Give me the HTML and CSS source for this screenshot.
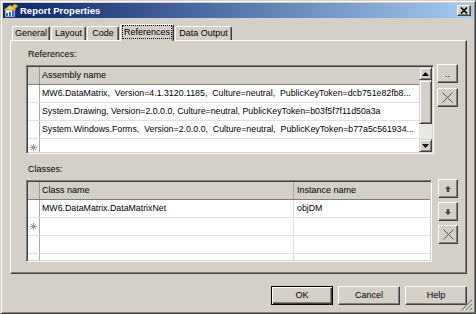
FILE: index.html
```html
<!DOCTYPE html>
<html>
<head>
<meta charset="utf-8">
<link rel="stylesheet" href="styles.css">
</head>
<body>
<div class="window">
  <div class="titlebar">
    <svg class="appicon" viewBox="0 0 16 15" width="16" height="15">
      <rect x="2" y="6" width="10" height="8" fill="#ffffff" stroke="#2a4c9a" stroke-width="1"/>
      <rect x="3" y="10" width="2" height="3" fill="#3a6ad0"/>
      <rect x="6" y="9" width="2" height="4" fill="#3a6ad0"/>
      <rect x="9" y="8" width="2" height="5" fill="#3a6ad0"/>
      <polygon points="6,5 12,1 15,3 10,8" fill="#e8b840" stroke="#a07020" stroke-width="0.6"/>
      <polygon points="1,7 7,2 13,7" fill="#f0d070" stroke="#a07020" stroke-width="0.6"/>
    </svg>
    <span class="title">Report Properties</span>
    <span class="close">
      <svg viewBox="0 0 8 7" width="8" height="7"><path d="M1 0.5 L7 6.5 M7 0.5 L1 6.5" stroke="#000" stroke-width="1.6"/></svg>
    </span>
  </div>
  <div class="content">
    <div class="tabs">
      <div class="tab t-general">General</div>
      <div class="tab t-layout">Layout</div>
      <div class="tab t-code">Code</div>
      <div class="tab t-refs sel"><span class="focus">References</span></div>
      <div class="tab t-data">Data Output</div>
    </div>
    <div class="panel">
      <div class="label lbl-refs">References:</div>
      <div class="row">
        <div class="grid grid-refs">
          <div class="gmain">
            <div class="gr head"><div class="rh"></div><div class="c">Assembly name</div></div>
            <div class="gr"><div class="rh"></div><div class="c">MW6.DataMatrix,  Version=4.1.3120.1185,  Culture=neutral,  PublicKeyToken=dcb751e82fb8...</div></div>
            <div class="gr"><div class="rh"></div><div class="c">System.Drawing, Version=2.0.0.0, Culture=neutral, PublicKeyToken=b03f5f7f11d50a3a</div></div>
            <div class="gr"><div class="rh"></div><div class="c">System.Windows.Forms,  Version=2.0.0.0,  Culture=neutral,  PublicKeyToken=b77a5c561934...</div></div>
            <div class="gr newrow"><div class="rh"><svg class="star" viewBox="0 0 7 7" width="7" height="7"><path d="M3.5 0 V7 M0 3.5 H7 M1 1 L6 6 M6 1 L1 6" stroke="#9a9a9a" stroke-width="1"/></svg></div><div class="c"></div></div>
          </div>
          <div class="vscroll">
            <div class="sbtn"><svg viewBox="0 0 7 4" width="7" height="4"><polygon points="0,4 3.5,0 7,4" fill="#000"/></svg></div>
            <div class="thumb"></div>
            <div class="track"></div>
            <div class="sbtn"><svg viewBox="0 0 7 4" width="7" height="4"><polygon points="0,0 3.5,4 7,0" fill="#000"/></svg></div>
          </div>
        </div>
        <div class="side side-refs">
          <div class="sb dots">..</div>
          <div class="sb"><svg viewBox="0 0 11 11" width="11" height="11"><path d="M0.5 0.5 L10.5 10.5 M10.5 0.5 L0.5 10.5" stroke="#555" stroke-width="1"/></svg></div>
        </div>
      </div>
      <div class="label lbl-cls">Classes:</div>
      <div class="row">
        <div class="grid grid-cls">
          <div class="gmain">
            <div class="gr head"><div class="rh"></div><div class="c c1">Class name</div><div class="c c2">Instance name</div></div>
            <div class="gr"><div class="rh"></div><div class="c c1">MW6.DataMatrix.DataMatrixNet</div><div class="c c2">objDM</div></div>
            <div class="gr newrow"><div class="rh"><svg class="star" viewBox="0 0 7 7" width="7" height="7"><path d="M3.5 0 V7 M0 3.5 H7 M1 1 L6 6 M6 1 L1 6" stroke="#9a9a9a" stroke-width="1"/></svg></div><div class="c c1"></div><div class="c c2"></div></div>
            <div class="gr"><div class="rh"></div><div class="c c1"></div><div class="c c2"></div></div>
            <div class="gr"><div class="rh"></div><div class="c c1"></div><div class="c c2"></div></div>
          </div>
        </div>
        <div class="side side-cls">
          <div class="sb sb2"><svg viewBox="0 0 6 6" width="6" height="6"><polygon points="3,0 6,3 4.2,3 4.2,6 1.8,6 1.8,3 0,3" fill="#404040"/></svg></div>
          <div class="sb sb2"><svg viewBox="0 0 6 6" width="6" height="6"><polygon points="3,6 6,3 4.2,3 4.2,0 1.8,0 1.8,3 0,3" fill="#404040"/></svg></div>
          <div class="sb sb2"><svg viewBox="0 0 11 11" width="11" height="11"><path d="M0.5 0.5 L10.5 10.5 M10.5 0.5 L0.5 10.5" stroke="#555" stroke-width="1"/></svg></div>
        </div>
      </div>
    </div>
    <div class="footer">
      <div class="btn default">OK</div>
      <div class="btn">Cancel</div>
      <div class="btn">Help</div>
    </div>
  </div>
  <svg class="grip" viewBox="0 0 12 12" width="12" height="12">
    <path d="M11 1 L1 11 M11 5 L5 11 M11 9 L9 11" stroke="#808080" stroke-width="1.2"/>
    <path d="M11 2.5 L2.5 11 M11 6.5 L6.5 11 M11 10.5 L10.5 11" stroke="#ffffff" stroke-width="0.8"/>
  </svg>
</div>
</body>
</html>
```
FILE: styles.css
```css
* { box-sizing: border-box; }
html, body { margin: 0; padding: 0; }
body {
  width: 476px;
  height: 314px;
  overflow: hidden;
  background: #d4d0c8;
  font-family: "Liberation Sans", Arial, sans-serif;
  font-size: 9px;
  color: #000;
}
.window {
  position: relative;
  width: 476px;
  height: 314px;
  background: #d4d0c8;
  border: 1px solid;
  border-color: #d4d0c8 #404040 #404040 #d4d0c8;
  box-shadow: inset 1px 1px 0 #fff, inset -1px -1px 0 #808080;
  padding: 2px;
}
.titlebar {
  height: 15px;
  display: flex;
  align-items: center;
  background: linear-gradient(to right, #0a246a, #a6caf0);
}
.appicon { flex: none; }
.title {
  flex: 1;
  margin-left: 1px;
  color: #fff;
  font-weight: bold;
  font-size: 9.5px;
  line-height: 15px;
}
.close {
  width: 14px;
  height: 11px;
  margin-right: 2px;
  background: #d4d0c8;
  border: 1px solid;
  border-color: #fff #404040 #404040 #fff;
  box-shadow: inset -1px -1px 0 #808080;
  display: flex;
  align-items: center;
  justify-content: center;
}
.content {
  margin: 6px 0 0 7px;
  width: 457px;
}
.tabs {
  display: flex;
  gap: 1px;
  padding-left: 2px;
  height: 16px;
  align-items: flex-end;
}
.tab {
  height: 14px;
  border: 1px solid;
  border-bottom: none;
  border-color: #fff #404040 transparent #fff;
  box-shadow: inset -1px 0 0 #808080;
  border-radius: 2px 2px 0 0;
  background: #d4d0c8;
  display: flex;
  align-items: center;
  justify-content: center;
  line-height: 11px;
}
.t-general { width: 38px; }
.t-layout { width: 35px; }
.t-code { width: 32px; }
.t-refs { width: 54px; }
.t-data { width: 57px; }
.tab.sel {
  height: 17px;
  margin-bottom: -1px;
  position: relative;
  z-index: 1;
  padding-bottom: 2px;
}
.focus {
  outline: 1px dotted #000;
  padding: 1px 1px;
  line-height: 10px;
}
.panel {
  height: 234px;
  border: 1px solid;
  border-color: #fff #404040 #404040 #fff;
  box-shadow: inset -1px -1px 0 #808080;
  padding: 7px 0 0 15px;
}
.label {
  height: 13px;
  line-height: 13px;
  margin-left: 2px;
}
.lbl-refs { margin-bottom: 4px; }
.lbl-cls { margin-top: 9px; margin-bottom: 4px; }
.row {
  display: flex;
  align-items: flex-start;
}
.grid {
  display: flex;
  background: #fff;
  border: 1px solid;
  border-color: #808080 #fff #fff #808080;
  box-shadow: inset 1px 1px 0 #404040, inset -1px -1px 0 #d4d0c8;
  padding: 1px;
}
.grid-refs { width: 408px; height: 89px; }
.grid-cls { width: 406px; height: 82px; }
.gmain {
  flex: 1;
  overflow: hidden;
  min-width: 0;
}
.gr {
  display: flex;
  height: 18px;
  border-bottom: 1px solid #e2e0dc;
}
.gr.head {
  background: #d4d0c8;
  border-bottom-color: #808080;
}
.rh {
  flex: none;
  width: 12px;
  border-right: 1px solid #a8a8a8;
  display: flex;
  align-items: center;
  justify-content: center;
}
.head .rh { border-right-color: #9a9a9a; }
.c {
  flex: 1;
  min-width: 0;
  padding-left: 2px;
  font-size: 8.8px;
  line-height: 17px;
  white-space: pre;
  overflow: hidden;
}
.head .c { font-size: 9px; }
.c1 {
  flex: none;
  width: 254px;
  border-right: 1px solid #e2e0dc;
}
.head .c1 { border-right-color: #a8a8a8; }
.c2 { padding-left: 3px; }
.vscroll {
  flex: none;
  width: 13px;
  display: flex;
  flex-direction: column;
  background: #eae8e4;
}
.sbtn, .thumb {
  flex: none;
  background: #d4d0c8;
  border: 1px solid;
  border-color: #d4d0c8 #404040 #404040 #d4d0c8;
  box-shadow: inset 1px 1px 0 #fff, inset -1px -1px 0 #808080;
}
.sbtn {
  height: 13px;
  display: flex;
  align-items: center;
  justify-content: center;
}
.thumb { height: 44px; }
.track { flex: 1; }
.side {
  display: flex;
  flex-direction: column;
  margin-top: -1px;
}
.side-refs { margin-left: 3px; gap: 5px; }
.side-cls { margin-left: 6px; gap: 4px; }
.sb {
  width: 21px;
  height: 19px;
  background: #d4d0c8;
  border: 1px solid;
  border-color: #fff #404040 #404040 #fff;
  box-shadow: inset -1px -1px 0 #808080;
  display: flex;
  align-items: center;
  justify-content: center;
}
.sb2 { width: 20px; }
.sb.dots {
  align-items: flex-end;
  line-height: 10px;
  padding-bottom: 3px;
  font-size: 9px;
}
.footer {
  display: flex;
  justify-content: flex-end;
  gap: 5px;
  margin-top: 12px;
}
.btn {
  width: 62px;
  height: 19px;
  background: #d4d0c8;
  border: 1px solid;
  border-color: #fff #404040 #404040 #fff;
  box-shadow: inset -1px -1px 0 #808080;
  display: flex;
  align-items: center;
  justify-content: center;
  line-height: 11px;
}
.btn.default {
  border-color: #000;
  box-shadow: inset 1px 1px 0 #fff, inset -1px -1px 0 #404040, inset -2px -2px 0 #808080;
}
.grip {
  position: absolute;
  right: 2px;
  bottom: 2px;
}
```
